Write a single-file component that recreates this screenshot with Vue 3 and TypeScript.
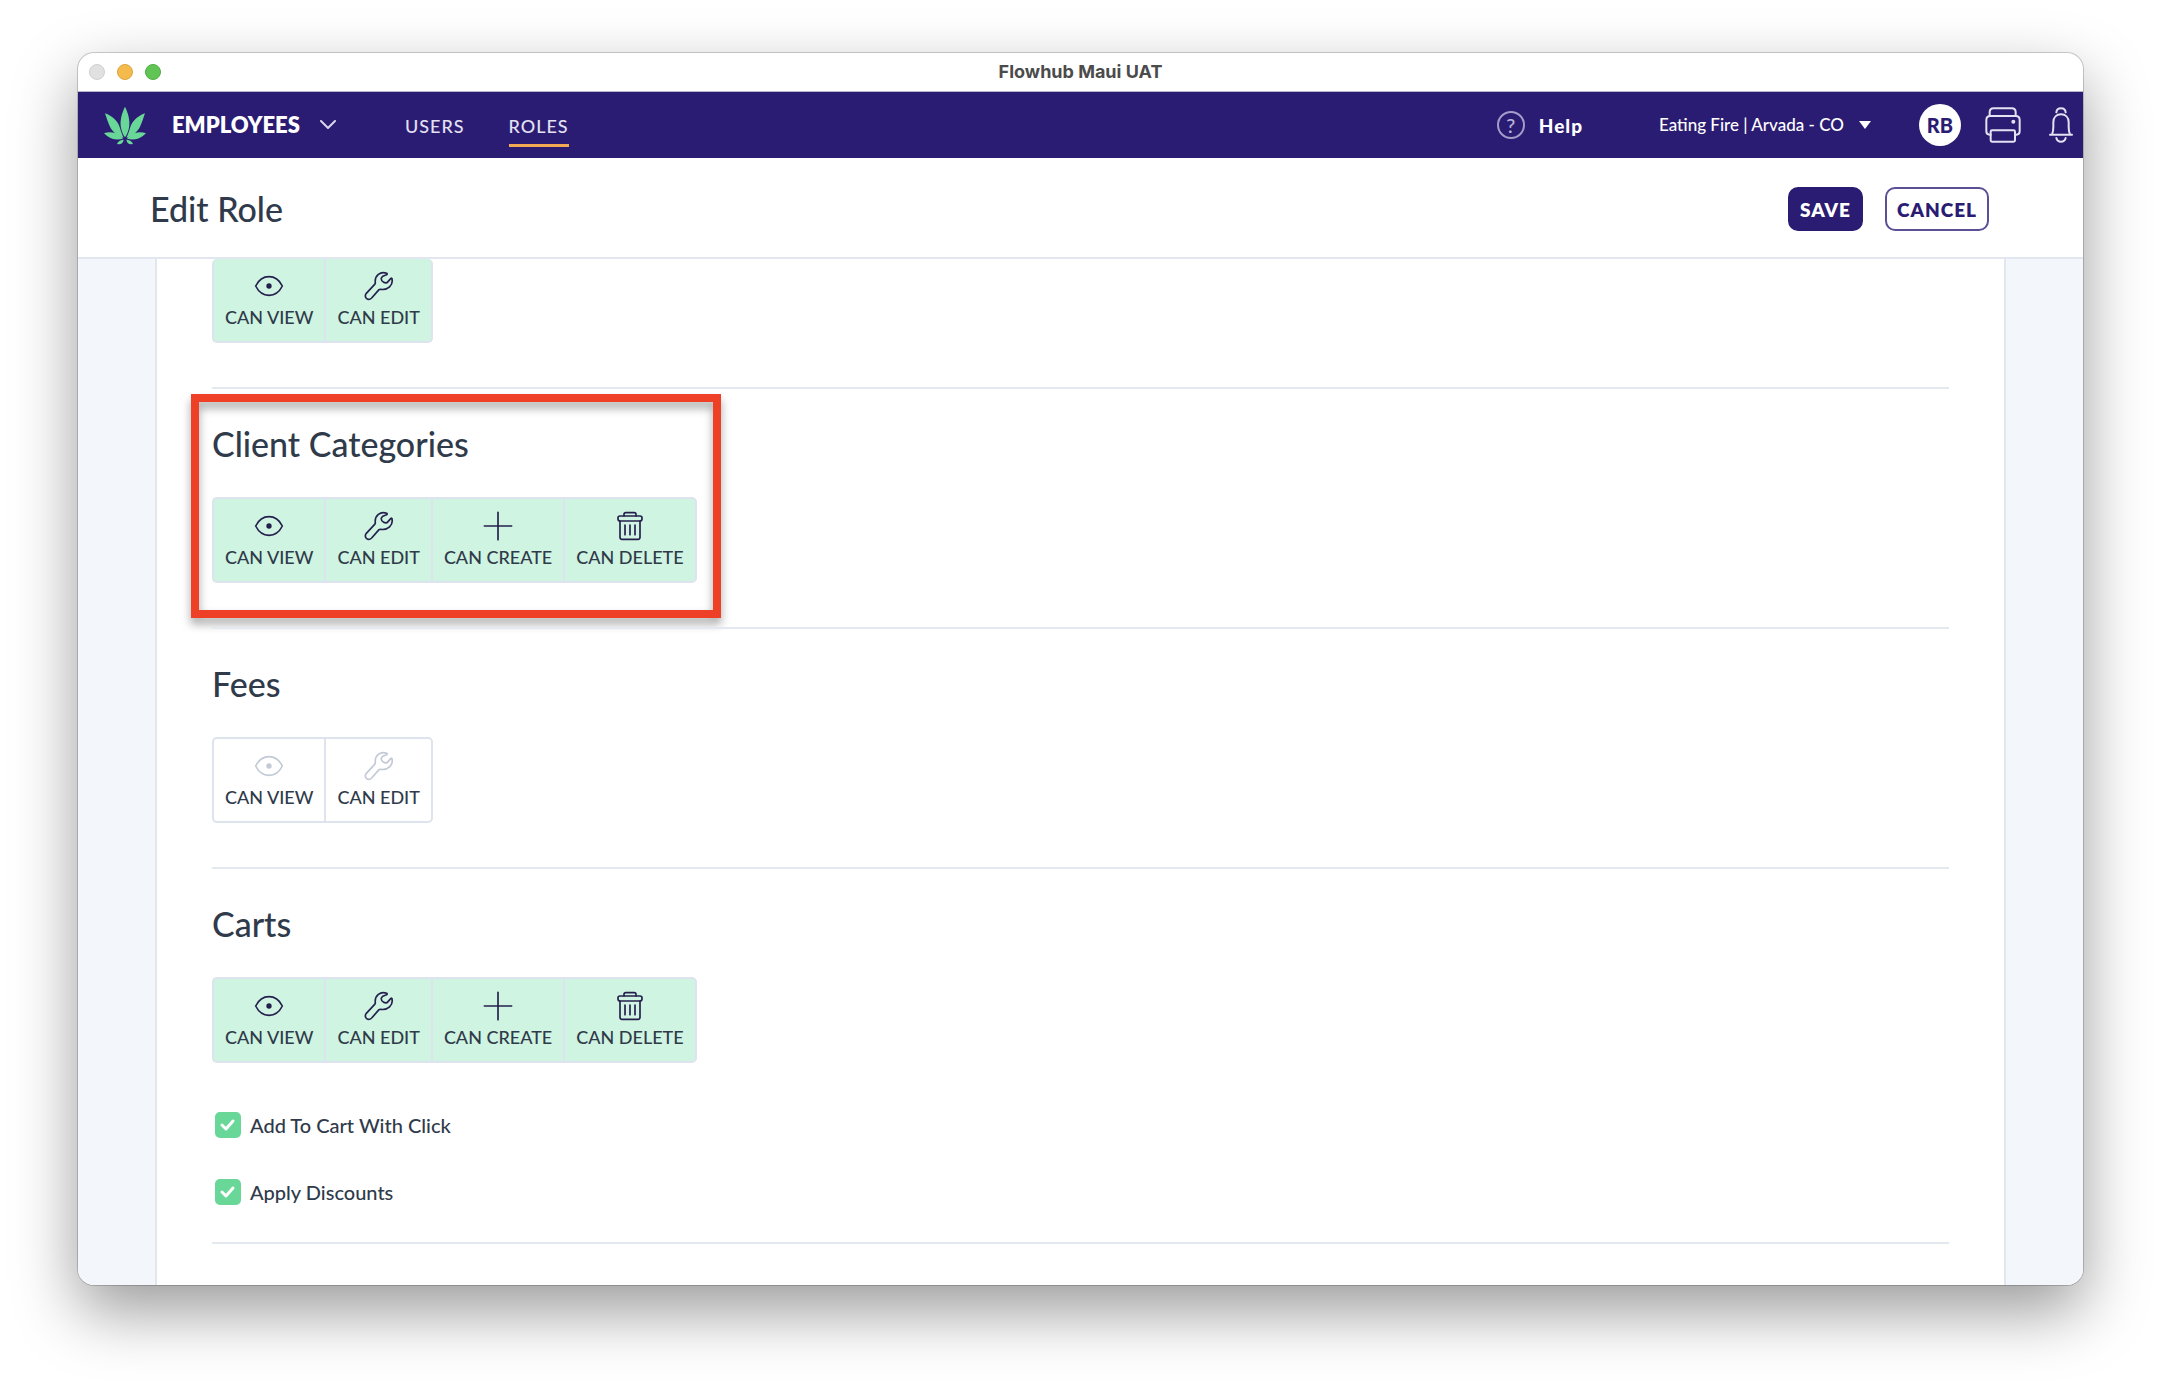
<script setup lang="ts">
import { reactive, ref } from 'vue'

type ActionKey = 'view' | 'edit' | 'create' | 'delete'

interface Permission {
  key: ActionKey
  on: boolean
}

interface Option {
  id: string
  label: string
  checked: boolean
}

interface Section {
  title: string
  highlighted: boolean
  permissions: Permission[]
  options: Option[]
}

const labels: Record<ActionKey, string> = {
  view: 'CAN VIEW',
  edit: 'CAN EDIT',
  create: 'CAN CREATE',
  delete: 'CAN DELETE',
}

function grant(on: boolean, ...keys: ActionKey[]): Permission[] {
  return keys.map((key) => ({ key, on }))
}

const location = ref('arvada')

const sections = reactive<Section[]>([
  { title: '', highlighted: false, permissions: grant(true, 'view', 'edit'), options: [] },
  {
    title: 'Client Categories',
    highlighted: true,
    permissions: grant(true, 'view', 'edit', 'create', 'delete'),
    options: [],
  },
  { title: 'Fees', highlighted: false, permissions: grant(false, 'view', 'edit'), options: [] },
  {
    title: 'Carts',
    highlighted: false,
    permissions: grant(true, 'view', 'edit', 'create', 'delete'),
    options: [
      { id: 'add-to-cart', label: 'Add To Cart With Click', checked: true },
      { id: 'apply-discounts', label: 'Apply Discounts', checked: true },
    ],
  },
])
</script>

<template>
  <div class="desktop">
    <div class="window">
      <div class="titlebar">
        <div class="lights">
          <span class="light close"></span>
          <span class="light minimise"></span>
          <span class="light zoom"></span>
        </div>
        <span class="window-title">Flowhub Maui UAT</span>
      </div>

      <nav class="nav">
        <svg class="logo" viewBox="0 0 126 117" aria-hidden="true">
          <path d="M63 2C73 22 79 45 75 65C73 78 67 88 63 94C59 88 53 78 51 65C47 45 53 22 63 2Z" />
          <g v-for="side in ['', 'translate(126 0) scale(-1 1)']" :key="side" :transform="side">
            <path d="M3 22C25 30 42 45 48 66C51 77 55 88 59 95C44 92 27 80 18 62C12 50 8 36 3 22Z" />
            <path d="M0 82C14 76 34 78 46 88C51 92 54 95 57 98C46 101 34 101 25 98C15 95 8 90 0 82Z" />
            <path d="M59 101C51 101 43 105 39 113C47 117 57 113 59 101Z" />
          </g>
        </svg>
        <button class="module" type="button">
          EMPLOYEES
          <svg class="chevron" viewBox="0 0 16 10" aria-hidden="true"><path d="M1 1L8 8L15 1" /></svg>
        </button>
        <a class="tab" href="#users">USERS</a>
        <a class="tab active" href="#roles" aria-current="page">ROLES</a>

        <div class="nav-right">
          <a class="help" href="#help"><span class="help-mark" aria-hidden="true">?</span>Help</a>
          <div class="location">
            <select v-model="location" aria-label="Location">
              <option value="arvada">Eating Fire | Arvada - CO</option>
            </select>
            <svg class="caret" viewBox="0 0 12 8" aria-hidden="true"><path d="M0 0H12L6 8Z" /></svg>
          </div>
          <button class="avatar" type="button">RB</button>
          <button class="icon-button" type="button" aria-label="Printers">
            <svg class="printer" viewBox="0 0 108 108" aria-hidden="true">
              <path d="M14 27V16Q14 4 26 4H80Q92 4 92 16V27" />
              <path d="M17 83H14Q4 83 4 73V39Q4 27 16 27H92Q104 27 104 39V73Q104 83 94 83H91" />
              <rect x="17" y="70" width="73" height="34" rx="4" />
              <circle cx="85" cy="44" r="3" />
            </svg>
          </button>
          <button class="icon-button" type="button" aria-label="Notifications">
            <svg class="bell" viewBox="0 0 72 108" aria-hidden="true">
              <path d="M22 16C23 7 29 4 36 4S49 7 50 16" />
              <path d="M3 83H69M9 83C12 76 13 70 13 60V46C13 31 23 22 36 22S59 31 59 46V60C59 70 60 76 63 83" />
              <path d="M22 93C24 101 29 104 36 104S48 101 50 93" />
            </svg>
          </button>
        </div>
      </nav>

      <header class="page-head">
        <h1>Edit Role</h1>
        <div class="head-actions">
          <button class="btn primary" type="button">SAVE</button>
          <button class="btn" type="button">CANCEL</button>
        </div>
      </header>

      <main class="body">
        <div class="sheet">
          <section
            v-for="(section, index) in sections"
            :key="index"
            class="section"
            :class="{ scrolled: !section.title }"
          >
            <h2 v-if="section.title">{{ section.title }}</h2>
            <div class="toggles" role="group" :aria-label="section.title || 'Permissions'">
              <button
                v-for="permission in section.permissions"
                :key="permission.key"
                type="button"
                class="toggle"
                :class="{ on: permission.on }"
                :aria-pressed="permission.on"
                @click="permission.on = !permission.on"
              >
                <svg viewBox="0 0 90 90" aria-hidden="true">
                  <template v-if="permission.key === 'view'">
                    <path d="M5 45C14 27 28 17 45 17S76 27 85 45C76 63 62 73 45 73S14 63 5 45Z" />
                    <circle class="pupil" cx="45" cy="45" r="8" />
                  </template>
                  <path
                    v-else-if="permission.key === 'edit'"
                    d="M68 7C50 0 31 13 34 36C34 38 33 39 32 40L7 67C2 73 4 80 8 83C13 87 19 85 23 81L45 56C46 55 48 55 50 55C72 58 88 43 84 24C84 21 82 21 80 23L72 32C66 40 50 32 52 22C53 19 54 18 56 16L68 11C70 9 70 8 68 7Z"
                  />
                  <path v-else-if="permission.key === 'create'" d="M45 4V86M4 45H86" />
                  <template v-else>
                    <path d="M27 15V10Q27 5 32 5H58Q63 5 63 10V15" />
                    <rect x="9" y="15" width="72" height="15" rx="6" />
                    <path d="M15 30V79Q15 85 21 85H69Q75 85 75 79V30M30 42V71M45 42V71M60 42V71" />
                  </template>
                </svg>
                <span>{{ labels[permission.key] }}</span>
              </button>
            </div>
            <div v-if="section.options.length" class="options">
              <label v-for="option in section.options" :key="option.id" class="option" :for="option.id">
                <span class="box">
                  <input :id="option.id" v-model="option.checked" type="checkbox" />
                  <svg viewBox="0 0 26 26" aria-hidden="true"><path d="M7 13L11 17L18 9" /></svg>
                </span>
                {{ option.label }}
              </label>
            </div>
            <div v-if="section.highlighted" class="callout"></div>
          </section>
          <section class="section"></section>
        </div>
      </main>
    </div>
  </div>
</template>

<style>
body {
  margin: 0;
  background: #fff;
}
</style>

<style scoped>
.desktop {
  box-sizing: border-box;
  display: flex;
  height: 100vh;
  padding: 53px 78px 103px;
  font-family: Lato, "Open Sans", sans-serif;
  font-weight: 500;
  color: #2f3a4a;
}

button,
select {
  margin: 0;
  padding: 0;
  border: 0;
  background: none;
  font: inherit;
  color: inherit;
  cursor: pointer;
}

a {
  color: inherit;
  text-decoration: none;
}

svg {
  display: block;
  fill: none;
  stroke: currentColor;
  stroke-linecap: round;
  stroke-linejoin: round;
}

.window {
  flex: 1;
  display: flex;
  flex-direction: column;
  overflow: hidden;
  border-radius: 16px;
  background: #fff;
  box-shadow: 0 0 0 1px rgba(0, 0, 0, 0.18), 0 26px 64px rgba(0, 0, 0, 0.4);
}

.titlebar {
  flex: none;
  display: grid;
  grid-template-columns: 1fr auto 1fr;
  align-items: center;
  height: 38px;
  padding: 0 11px;
  border-bottom: 1px solid #b9b5cf;
}

.lights {
  display: flex;
  gap: 12px;
}

.light {
  box-sizing: border-box;
  width: 16px;
  height: 16px;
  border: 1px solid #cfcfcf;
  border-radius: 50%;
  background: #e1e1e1;
}

.minimise {
  border-color: #dfa23b;
  background: #f4bb4c;
}

.zoom {
  border-color: #52ac42;
  background: #60c554;
}

.window-title {
  font: 700 18px/24px Inter, sans-serif;
  color: #4b4b4b;
}

.nav {
  flex: none;
  display: flex;
  align-items: center;
  height: 66px;
  padding: 0 10px 0 26px;
  background: #2b1c73;
  color: #fff;
}

.logo {
  width: 42px;
  height: 39px;
  margin-right: 26px;
  fill: #69d797;
  stroke: none;
}

.module {
  display: flex;
  align-items: center;
  gap: 20px;
  margin-right: 69px;
  font-size: 22px;
  font-weight: 800;
  line-height: 32px;
}

.chevron {
  width: 16px;
  height: 10px;
  stroke-width: 2;
  color: #d9d6ea;
}

.tab {
  margin-right: 44px;
  padding: 5px 0 4px;
  border-bottom: 3px solid transparent;
  border-top: 3px solid transparent;
  font-size: 18px;
  line-height: 28px;
  letter-spacing: 1px;
  color: #e4e1f2;
}

.tab.active {
  border-bottom-color: #f2ab52;
}

.nav-right {
  display: flex;
  align-items: center;
  margin-left: auto;
}

.help {
  display: flex;
  align-items: center;
  gap: 14px;
  margin-right: 76px;
  font-size: 19px;
  font-weight: 900;
  letter-spacing: 1px;
}

.help-mark {
  box-sizing: border-box;
  width: 28px;
  height: 28px;
  border: 2px solid #a39dc9;
  border-radius: 50%;
  font-size: 20px;
  font-weight: 500;
  line-height: 24px;
  letter-spacing: 0;
  text-align: center;
  color: #b9b4d8;
}

.location {
  display: flex;
  align-items: center;
  gap: 14px;
  margin-right: 48px;
}

.location select {
  appearance: none;
  font-size: 17px;
  line-height: 28px;
}

.caret {
  width: 12px;
  height: 8px;
  fill: #fff;
  stroke: none;
}

.avatar {
  width: 42px;
  height: 42px;
  margin-right: 24px;
  border-radius: 50%;
  background: #fff;
  color: #2b1c73;
  font-size: 20px;
  font-weight: 900;
}

.icon-button {
  color: #e4e1f2;
}

.printer {
  width: 36px;
  height: 36px;
  margin-right: 28px;
  stroke-width: 6;
}

.bell {
  width: 24px;
  height: 36px;
  stroke-width: 6;
}

.page-head {
  flex: none;
  box-sizing: border-box;
  display: flex;
  align-items: center;
  justify-content: space-between;
  height: 101px;
  padding: 3px 94px 0 72px;
  border-bottom: 2px solid #e2e7ef;
}

h1,
h2 {
  margin: 0;
  font-size: 34px;
  font-weight: 500;
  line-height: 40px;
}

.head-actions {
  display: flex;
  gap: 22px;
}

.btn {
  box-sizing: border-box;
  height: 44px;
  padding: 0 10px;
  border: 2px solid #5b4f95;
  border-radius: 10px;
  font-size: 19px;
  font-weight: 800;
  letter-spacing: 1px;
  color: #2b1c73;
}

.btn.primary {
  border-color: #2b1c73;
  background: #2b1c73;
  color: #fff;
}

.body {
  flex: 1;
  display: flex;
  min-height: 0;
  padding: 0 77px;
  overflow: hidden;
  background: #f3f7fc;
}

.sheet {
  flex: 1;
  padding: 0 55px;
  border: solid #e2e7ef;
  border-width: 0 2px;
  background: #fff;
}

.section {
  position: relative;
  padding: 35px 0 44px;
  border-top: 2px solid #e4e8ef;
}

.section.scrolled {
  padding-top: 0;
  border-top: 0;
}

h2 {
  margin-bottom: 33px;
}

.toggles {
  display: flex;
}

.toggle {
  display: flex;
  flex-direction: column;
  align-items: center;
  gap: 4px;
  padding: 12px 11px;
  border: solid #dde4ee;
  border-width: 2px 0 2px 2px;
  font-size: 18px;
  line-height: 24px;
}

.scrolled .toggle {
  border-top-width: 0;
}

.toggle:first-child {
  border-radius: 5px 0 0 5px;
}

.toggle:last-child {
  border-right-width: 2px;
  border-radius: 0 5px 5px 0;
}

.toggle.on {
  background: #cff4e1;
}

.toggle svg {
  width: 30px;
  height: 30px;
  stroke-width: 5;
  color: #c3cad6;
}

.toggle.on svg {
  color: #251f4d;
}

.toggle .pupil {
  fill: currentColor;
  stroke: none;
}

.options {
  display: flex;
  flex-direction: column;
  align-items: flex-start;
  gap: 41px;
  margin: 49px 0 -7px 3px;
}

.option {
  display: flex;
  align-items: center;
  gap: 9px;
  font-size: 20px;
  line-height: 26px;
}

.box {
  display: grid;
}

.box input {
  grid-area: 1 / 1;
  appearance: none;
  width: 26px;
  height: 26px;
  margin: 0;
  border: 2px solid #c3cad6;
  border-radius: 5px;
}

.box input:checked {
  border-color: #69d797;
  background: #69d797;
}

.box svg {
  grid-area: 1 / 1;
  width: 26px;
  height: 26px;
  stroke-width: 3;
  color: #fff;
  pointer-events: none;
}

.callout {
  position: absolute;
  box-sizing: border-box;
  top: 5px;
  left: -21px;
  width: 530px;
  height: 224px;
  border: 8px solid #ee4026;
  filter: drop-shadow(0 6px 5px rgba(0, 0, 0, 0.35));
  pointer-events: none;
}
</style>
